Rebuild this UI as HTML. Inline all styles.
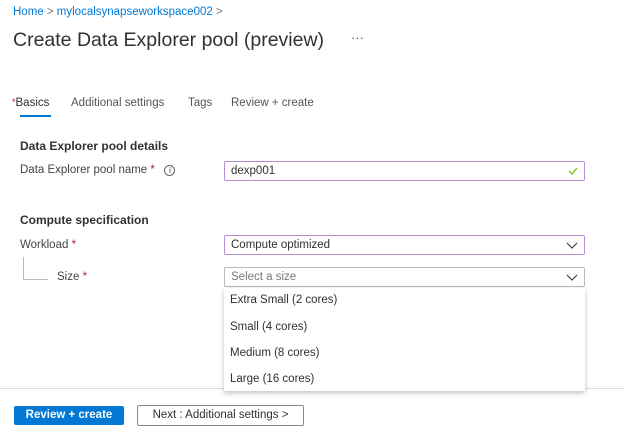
<!DOCTYPE html>
<html><head><meta charset="utf-8"><style>
body{margin:0;width:624px;height:434px;background:#fff;font-family:"Liberation Sans",sans-serif;color:#323130;position:relative;overflow:hidden}
.a{position:absolute;white-space:nowrap}
.f{font-size:11.5px}
.box{position:absolute;left:224px;width:353px;height:18px;border:1px solid #b4a0d0;border-radius:2px;background:#fff;font-size:11.5px;line-height:19px;padding-left:6px;box-sizing:content-box}
.req{color:#a4262c}
.chev{position:absolute;right:6px;top:4px}
.item{position:absolute;left:6px;font-size:11.5px;color:#323130}
</style></head><body>
<div class="a" style="left:13px;top:6px;color:#0078d4;font-size:11.5px">Home <span style="color:#777">&gt;</span> mylocalsynapseworkspace002 <span style="color:#777">&gt;</span></div>
<div class="a" style="left:13px;top:29px;font-size:19.5px;color:#323130">Create Data Explorer pool (preview)</div>
<div class="a" style="left:351px;top:30px;font-size:13px;color:#555">···</div>

<div class="a f" style="left:12px;top:97px"><span class="req" style="font-size:9px;vertical-align:top">*</span>Basics</div>
<div class="a" style="left:20px;top:115px;width:31px;height:2px;background:#0078d4"></div>
<div class="a f" style="left:71px;top:97px;color:#555">Additional settings</div>
<div class="a f" style="left:188px;top:97px;color:#555">Tags</div>
<div class="a f" style="left:231px;top:97px;color:#555">Review + create</div>

<div class="a" style="left:20px;top:139px;font-size:12px;font-weight:bold;color:#323130">Data Explorer pool details</div>
<div class="a f" style="left:20px;top:164px;color:#444">Data Explorer pool name <span class="req">*</span> &nbsp; <span style="display:inline-block;width:9px;height:9px;border:1px solid #666;border-radius:50%;font-size:8px;line-height:9px;text-align:center">i</span></div>
<div class="box" style="top:161px;border-color:#b58fd6">dexp001<svg class="chev" style="top:5px" width="10" height="8"><path d="M1 4l3 3 5-6" stroke="#6bb700" fill="none" stroke-width="1.2"/></svg></div>

<div class="a" style="left:20px;top:213px;font-size:12px;font-weight:bold">Compute specification</div>
<div class="a f" style="left:20px;top:239px;color:#444">Workload <span class="req">*</span></div>
<div class="box" style="top:235px;border-color:#b58fd6">Compute optimized<svg class="chev" style="top:6px" width="12" height="7"><path d="M1 1l5 5 5-5" stroke="#444" fill="none" stroke-width="1.2"/></svg></div>
<div class="a" style="left:23px;top:257px;width:1px;height:22px;background:#bbb"></div>
<div class="a" style="left:23px;top:279px;width:25px;height:1px;background:#bbb"></div>
<div class="a f" style="left:57px;top:271px;color:#444">Size <span class="req">*</span></div>
<div class="box" style="top:267px;border-color:#bbb;color:#777">Select a size<svg class="chev" style="top:6px" width="12" height="7"><path d="M1 1l5 5 5-5" stroke="#444" fill="none" stroke-width="1.2"/></svg></div>

<div class="a" style="left:0;top:388px;width:624px;height:1px;background:#ddd"></div>
<div class="a" style="left:224px;top:288px;width:361px;height:103px;background:#fff;box-shadow:0 2px 5px rgba(0,0,0,.25)">
<div class="item" style="top:6px">Extra Small (2 cores)</div>
<div class="item" style="top:33px">Small (4 cores)</div>
<div class="item" style="top:59px">Medium (8 cores)</div>
<div class="item" style="top:85px">Large (16 cores)</div>
</div>

<div class="a" style="left:14px;top:406px;width:110px;height:19px;background:#0078d4;border-radius:2px;color:#fff;font-size:11.5px;font-weight:bold;text-align:center;line-height:19px">Review + create</div>
<div class="a" style="left:137px;top:405px;width:165px;height:19px;border:1px solid #8a8886;border-radius:2px;font-size:11.5px;text-align:center;line-height:19px">Next : Additional settings &gt;</div>
</body></html>
